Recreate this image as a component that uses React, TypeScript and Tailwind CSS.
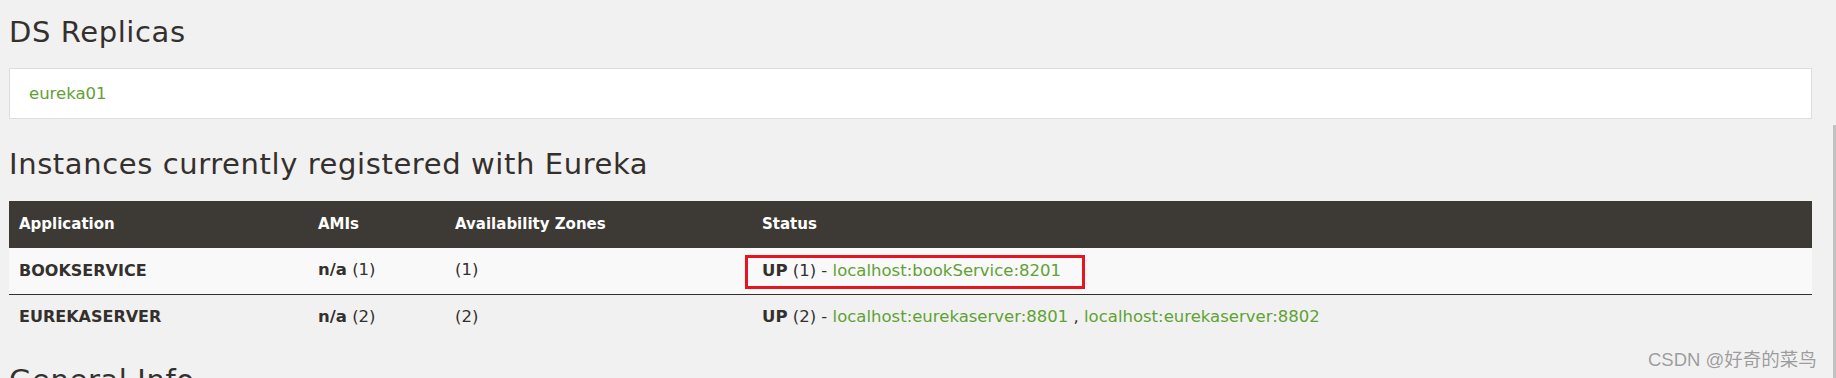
const head = "font-['DejaVu_Sans','Noto_Sans',sans-serif]";

function StatusLinks({ links }: { links: string[] }) {
  return (
    <>
      {links.map((l, i) => (
        <span key={l}>
          {i > 0 && " , "}
          <a href="#" className="text-[#5fa134]">
            {l}
          </a>
        </span>
      ))}
    </>
  );
}

const rows = [
  {
    app: "BOOKSERVICE",
    count: 1,
    links: ["localhost:bookService:8201"],
    boxed: true,
  },
  {
    app: "EUREKASERVER",
    count: 2,
    links: ["localhost:eurekaserver:8801", "localhost:eurekaserver:8802"],
    boxed: false,
  },
];

export default function App() {
  return (
    <div className="relative h-[378px] w-[1836px] overflow-hidden bg-[#f1f1f1] text-[#34302d]">
      <div className="w-[1803px] pl-[9px] box-content font-['DejaVu_Sans','Noto_Sans',sans-serif] text-[16.5px]">
        <h1 className={`${head} pt-[14px] text-[29px] leading-[36px] tracking-[0.6px]`}>
          DS Replicas
        </h1>
        <div className="mt-[18px] flex h-[51px] items-center border border-[#dddddd] bg-white pl-[19px]">
          <a href="#" className="pt-[1px] text-[#5fa134]">
            eureka01
          </a>
        </div>
        <h2 className={`${head} mt-[27px] text-[29px] leading-[36px] tracking-[0.6px]`}>
          Instances currently registered with Eureka
        </h2>
        <table className="mt-[19px] w-full border-collapse">
          <thead>
            <tr className="h-[47px] bg-[#3d3a35] text-left text-[15px] text-white">
              <th className="w-[299px] pl-[10px] font-bold">Application</th>
              <th className="w-[137px] pl-[10px] font-bold">AMIs</th>
              <th className="w-[307px] pl-[10px] font-bold">Availability Zones</th>
              <th className="pl-[10px] font-bold">Status</th>
            </tr>
          </thead>
          <tbody>
            {rows.map((r) => (
              <tr
                key={r.app}
                className={`h-[46px] ${r.boxed ? "border-b border-[#34302d] bg-[#f9f9f9]" : ""}`}
              >
                <td className="pl-[10px] text-[16px] font-bold">{r.app}</td>
                <td className="pl-[10px]">
                  <b>n/a</b> ({r.count})
                </td>
                <td className="pl-[10px]">({r.count})</td>
                <td className="pl-[10px]">
                  {r.boxed ? (
                    <span className="-ml-[17px] mt-[2px] inline-flex h-[34px] w-[340px] items-center border-[3px] border-[#e8141e] pl-[14px] align-middle">
                      <span>
                        <b>UP</b> ({r.count}) - <StatusLinks links={r.links} />
                      </span>
                    </span>
                  ) : (
                    <span>
                      <b>UP</b> ({r.count}) - <StatusLinks links={r.links} />
                    </span>
                  )}
                </td>
              </tr>
            ))}
          </tbody>
        </table>
        <h2 className={`${head} mt-[22px] text-[29px] leading-[36px] tracking-[0.6px]`}>
          General Info
        </h2>
      </div>

      {/* scrollbar sliver on the right edge */}
      <div className="absolute right-0 top-[125px] h-[253px] w-[3px] bg-[#c1c1c1]" />

      {/* CSDN watermark */}
      <div className="absolute left-[1648px] top-[346px] font-['Liberation_Sans','Noto_Sans_CJK_SC',sans-serif] text-[18.5px] text-[#9c9c9c] [text-shadow:0_0_1px_#ffffff]">
        CSDN @好奇的菜鸟
      </div>
    </div>
  );
}
